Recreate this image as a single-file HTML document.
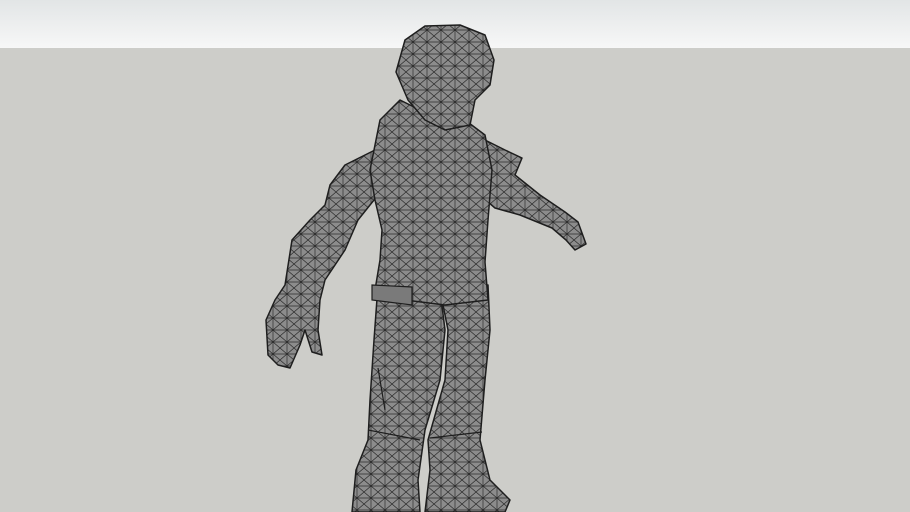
<!DOCTYPE html>
<html><head><meta charset="utf-8"><style>
html,body{margin:0;padding:0;width:910px;height:512px;overflow:hidden;background:#cdcdc9}
</style></head><body>
<svg width="910" height="512" viewBox="0 0 910 512" xmlns="http://www.w3.org/2000/svg">
<defs>
<linearGradient id="sky" x1="0" y1="0" x2="0" y2="1">
<stop offset="0" stop-color="#e2e5e6"/><stop offset="1" stop-color="#f7f7f7"/>
</linearGradient>
<pattern id="mesh" width="14" height="12" patternUnits="userSpaceOnUse">
<rect width="14" height="12" fill="#8c8c8c"/>
<path d="M0 0L14 12M14 0L0 12M0 6H14M7 0V12" stroke="#2e2e2e" stroke-width="0.7" fill="none"/>
</pattern>
</defs>
<rect x="0" y="0" width="910" height="48" fill="url(#sky)"/>
<rect x="0" y="48" width="910" height="464" fill="#cdcdc9"/>
<g fill="url(#mesh)" stroke="#1e1e1e" stroke-width="1.5" stroke-linejoin="round">
<!-- right arm -->
<path d="M475 135 L505 150 L522 158 L515 175 L540 195 L565 212 L578 222 L586 244 L575 250 L566 240 L552 228 L520 215 L495 208 L480 195 Z"/>
<!-- left arm -->
<path d="M345 165 L375 150 L378 195 L358 220 L345 250 L325 280 L320 300 L318 330 L322 355 L312 352 L305 330 L300 345 L290 368 L278 365 L268 355 L266 320 L275 300 L285 285 L292 240 L310 220 L325 205 L330 185 Z"/>
<!-- legs -->
<path d="M378 285 L440 290 L445 330 L440 380 L425 430 L418 480 L420 512 L352 512 L356 470 L368 440 L370 400 L374 340 Z"/>
<path d="M440 290 L488 285 L490 330 L485 380 L480 440 L490 480 L510 500 L505 512 L425 512 L430 470 L428 440 L445 380 L448 330 Z"/>
<!-- torso -->
<path d="M380 120 L400 100 L430 115 L465 120 L485 135 L492 170 L488 220 L485 262 L488 300 L445 305 L405 300 L375 290 L380 260 L382 230 L375 200 L370 170 Z"/>
<!-- head -->
<path d="M405 40 L425 26 L460 25 L485 35 L494 60 L490 85 L475 100 L470 125 L445 130 L425 120 L408 100 L396 72 Z"/>
</g>
<g fill="none" stroke="#1e1e1e" stroke-width="1.2">
<path d="M372 285 L412 287 L412 305 L372 300 Z" fill="#7a7a7a"/>
<path d="M368 430 L420 440 M430 438 L482 432 M378 368 L385 410"/>
</g>
</svg>
</body></html>
